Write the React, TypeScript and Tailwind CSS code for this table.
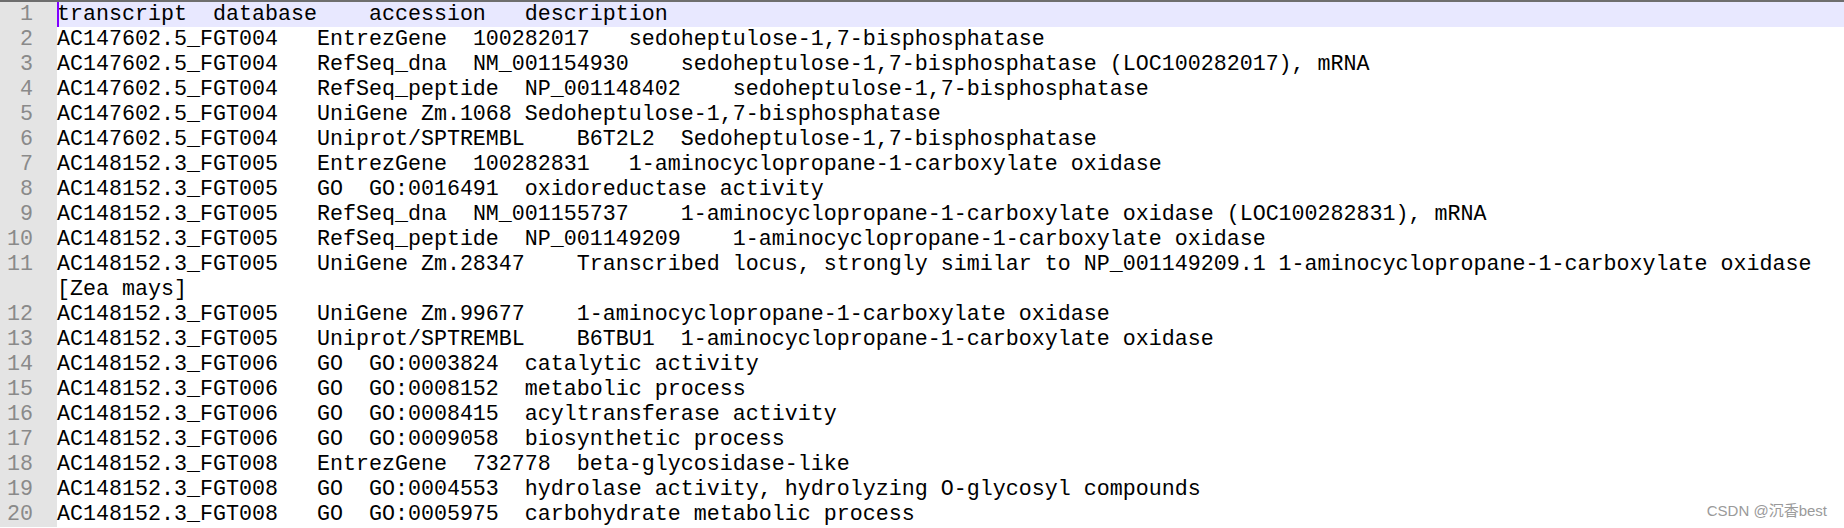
import React from "react";

const lines: string[][] = [
  ["transcript\tdatabase\taccession\tdescription"],
  ["AC147602.5_FGT004\tEntrezGene\t100282017\tsedoheptulose-1,7-bisphosphatase"],
  ["AC147602.5_FGT004\tRefSeq_dna\tNM_001154930\tsedoheptulose-1,7-bisphosphatase (LOC100282017), mRNA"],
  ["AC147602.5_FGT004\tRefSeq_peptide\tNP_001148402\tsedoheptulose-1,7-bisphosphatase"],
  ["AC147602.5_FGT004\tUniGene\tZm.1068\tSedoheptulose-1,7-bisphosphatase"],
  ["AC147602.5_FGT004\tUniprot/SPTREMBL\tB6T2L2\tSedoheptulose-1,7-bisphosphatase"],
  ["AC148152.3_FGT005\tEntrezGene\t100282831\t1-aminocyclopropane-1-carboxylate oxidase"],
  ["AC148152.3_FGT005\tGO\tGO:0016491\toxidoreductase activity"],
  ["AC148152.3_FGT005\tRefSeq_dna\tNM_001155737\t1-aminocyclopropane-1-carboxylate oxidase (LOC100282831), mRNA"],
  ["AC148152.3_FGT005\tRefSeq_peptide\tNP_001149209\t1-aminocyclopropane-1-carboxylate oxidase"],
  [
    "AC148152.3_FGT005\tUniGene\tZm.28347\tTranscribed locus, strongly similar to NP_001149209.1 1-aminocyclopropane-1-carboxylate oxidase",
    "[Zea mays]",
  ],
  ["AC148152.3_FGT005\tUniGene\tZm.99677\t1-aminocyclopropane-1-carboxylate oxidase"],
  ["AC148152.3_FGT005\tUniprot/SPTREMBL\tB6TBU1\t1-aminocyclopropane-1-carboxylate oxidase"],
  ["AC148152.3_FGT006\tGO\tGO:0003824\tcatalytic activity"],
  ["AC148152.3_FGT006\tGO\tGO:0008152\tmetabolic process"],
  ["AC148152.3_FGT006\tGO\tGO:0008415\tacyltransferase activity"],
  ["AC148152.3_FGT006\tGO\tGO:0009058\tbiosynthetic process"],
  ["AC148152.3_FGT008\tEntrezGene\t732778\tbeta-glycosidase-like"],
  ["AC148152.3_FGT008\tGO\tGO:0004553\thydrolase activity, hydrolyzing O-glycosyl compounds"],
  ["AC148152.3_FGT008\tGO\tGO:0005975\tcarbohydrate metabolic process"],
];

const mono = "font-['Liberation_Mono','Courier_New',monospace]";

export default function App() {
  return (
    <div className="relative h-[528px] w-full overflow-hidden bg-white">
      <div className="h-[2px] bg-[#6e6e6e]" />
      <div className={`flex flex-col ${mono} text-[21.67px] leading-[25px]`}>
        {lines.map((parts, i) =>
          parts.map((text, j) => (
            <div
              key={`${i}-${j}`}
              className={`flex h-[25px] ${i === 0 ? "bg-[#e8e8ff]" : ""}`}
            >
              <div className="w-[57px] shrink-0 bg-[#e4e4e4] pr-[24px] text-right text-[#8a8a8a]">
                {j === 0 ? i + 1 : ""}
              </div>
              <div className="relative flex-1 whitespace-pre text-black [tab-size:4]">
                {i === 0 && j === 0 && (
                  <span className="absolute left-0 top-0 h-[25px] w-[2px] bg-[#8000ff]" />
                )}
                {text}
              </div>
            </div>
          ))
        )}
      </div>
      <div className="absolute bottom-[6px] right-[17px] font-['Liberation_Sans','Noto_Sans_CJK_SC',sans-serif] text-[15px] text-[#9a9a9a]">
        CSDN @沉香best
      </div>
    </div>
  );
}
